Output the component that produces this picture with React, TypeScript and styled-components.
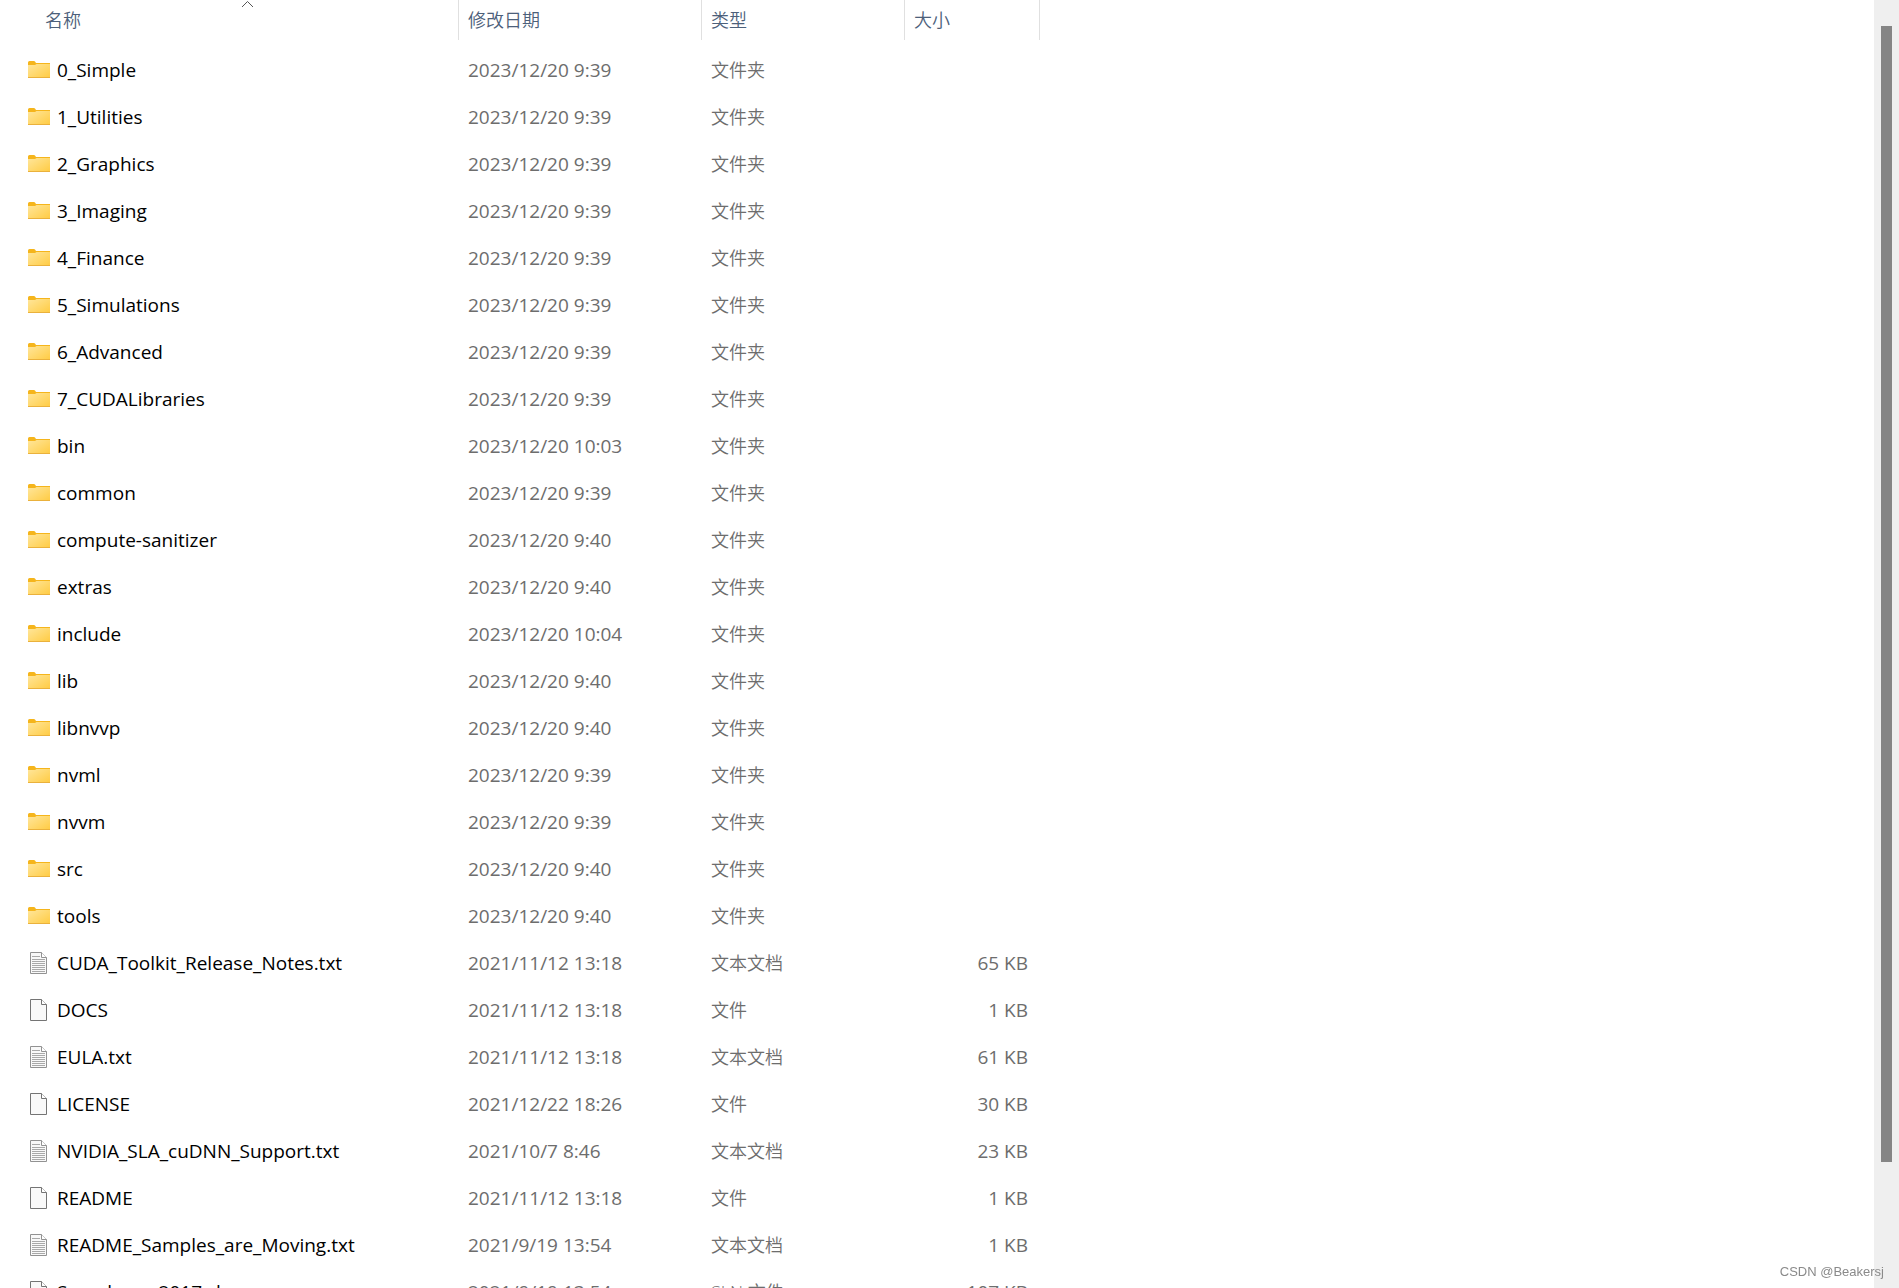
import React from "react";
import styled, { createGlobalStyle } from "styled-components";

const GlobalStyle = createGlobalStyle`
  * { box-sizing: border-box; }
  body {
    margin: 0;
    background: #fff;
    font-family: "Open Sans", "Noto Sans CJK SC", sans-serif;
    color: #000;
  }
`;

const Window = styled.main`
  display: flex;
  height: 100vh;
  overflow: hidden;
`;

const Content = styled.div`
  flex: 1;
  min-width: 0;
  overflow: hidden;
`;

const FileTable = styled.table`
  width: 100%;
  border-collapse: separate;
  border-spacing: 0;
  table-layout: fixed;
`;

const Column = styled.col<{ $width?: number }>`
  width: ${(p) => (p.$width ? `${p.$width}px` : "auto")};
`;

const HeaderCell = styled.th<{ $divider?: boolean }>`
  position: relative;
  height: 40px;
  padding: 0;
  border-right: ${(p) => (p.$divider ? "1px solid #e0e0e0" : "none")};
`;

const SortButton = styled.button<{ $indent?: boolean }>`
  display: block;
  width: 100%;
  height: 40px;
  padding: 0 0 2px ${(p) => (p.$indent ? 45 : 9)}px;
  border: 0;
  background: none;
  color: #4c607a;
  font: 18px/38px "Noto Sans CJK SC", sans-serif;
  font-weight: 350;
  text-align: left;
`;

const SortArrow = styled.svg`
  position: absolute;
  top: 0;
  left: 241px;
  width: 13px;
  height: 8px;
`;

const Spacer = styled.tr`
  height: 6px;
`;

const Cell = styled.td<{ $align?: "right" }>`
  height: 47px;
  padding: 0 12px 0 9px;
  color: #6d6d6d;
  font-size: 19px;
  line-height: 24px;
  text-align: ${(p) => p.$align ?? "left"};
  white-space: nowrap;
`;

const TypeCell = styled(Cell)`
  font-size: 18px;
  font-weight: 350;
`;

const NameCell = styled(Cell)`
  padding: 0 0 0 28px;
  color: #000;
`;

const NameGroup = styled.div`
  display: flex;
  align-items: center;
  gap: 6px;
`;

const Icon = styled.svg`
  display: block;
  flex: none;
  width: 23px;
  height: 24px;
`;

const ScrollTrack = styled.div`
  flex: none;
  width: 25px;
  padding: 26px 7px 0;
  background: #efefef;
`;

const ScrollThumb = styled.div`
  height: 90%;
  background: #858585;
`;

const Watermark = styled.div`
  position: fixed;
  right: 15px;
  bottom: 8px;
  color: #8a8a8a;
  font: 13px/16px "Liberation Sans", Arial, sans-serif;
`;

function FolderIcon() {
  return (
    <Icon viewBox="0 0 23 24" aria-hidden="true">
      <defs>
        <linearGradient id="folder" x1="0" y1="0" x2="1" y2="1">
          <stop offset="0" stopColor="#ffe69b" />
          <stop offset="1" stopColor="#ffcb42" />
        </linearGradient>
      </defs>
      <path d="M0 4.5Q0 3 1.5 3H6Q7 3 8 5H22V12H0Z" fill="#f5b51c" />
      <path d="M0 7H7L8.500 6H22V20H0Z" fill="url(#folder)" />
      <path d="M0 19H22V20H0Z" fill="#eab13c" />
    </Icon>
  );
}

function PageIcon({ lined }: { lined?: boolean }) {
  const ink = lined ? "#929292" : "#747474";
  return (
    <Icon viewBox="0 0 23 24" aria-hidden="true">
      <path d="M2.500 1.500H13.500L18.500 6.500V22.500H2.500Z" fill="#f9f9f9" stroke={ink} />
      <path d="M13.500 1.500V6.500H18.500" fill="#fff" stroke={ink} />
      {lined && (
        <path
          d="M4 5.500H12M4 8.500H17M4 10.500H17M4 12.500H17M4 14.500H17M4 16.500H17M4 18.500H17M4 20.500H17"
          stroke="#a9a9a9"
        />
      )}
    </Icon>
  );
}

type Entry = [name: string, date: string, type: string, size?: string];

const folder = (name: string, time = "9:39"): Entry => [name, `2023/12/20 ${time}`, "文件夹"];

const entries: Entry[] = [
  folder("0_Simple"),
  folder("1_Utilities"),
  folder("2_Graphics"),
  folder("3_Imaging"),
  folder("4_Finance"),
  folder("5_Simulations"),
  folder("6_Advanced"),
  folder("7_CUDALibraries"),
  folder("bin", "10:03"),
  folder("common"),
  folder("compute-sanitizer", "9:40"),
  folder("extras", "9:40"),
  folder("include", "10:04"),
  folder("lib", "9:40"),
  folder("libnvvp", "9:40"),
  folder("nvml"),
  folder("nvvm"),
  folder("src", "9:40"),
  folder("tools", "9:40"),
  ["CUDA_Toolkit_Release_Notes.txt", "2021/11/12 13:18", "文本文档", "65 KB"],
  ["DOCS", "2021/11/12 13:18", "文件", "1 KB"],
  ["EULA.txt", "2021/11/12 13:18", "文本文档", "61 KB"],
  ["LICENSE", "2021/12/22 18:26", "文件", "30 KB"],
  ["NVIDIA_SLA_cuDNN_Support.txt", "2021/10/7 8:46", "文本文档", "23 KB"],
  ["README", "2021/11/12 13:18", "文件", "1 KB"],
  ["README_Samples_are_Moving.txt", "2021/9/19 13:54", "文本文档", "1 KB"],
  ["Samples_vs2017.sln", "2021/9/19 13:54", "SLN 文件", "107 KB"],
];

export default function App() {
  return (
    <Window>
      <GlobalStyle />
      <Content>
        <FileTable>
          <colgroup>
            <Column $width={459} />
            <Column $width={243} />
            <Column $width={203} />
            <Column $width={135} />
            <Column />
          </colgroup>
          <thead>
            <tr>
              <HeaderCell $divider scope="col" aria-sort="ascending">
                <SortArrow viewBox="0 0 13 8" aria-hidden="true">
                  <path d="M1 7L6.500 1.500L12 7" fill="none" stroke="#555" />
                </SortArrow>
                <SortButton $indent>名称</SortButton>
              </HeaderCell>
              <HeaderCell $divider scope="col"><SortButton>修改日期</SortButton></HeaderCell>
              <HeaderCell $divider scope="col"><SortButton>类型</SortButton></HeaderCell>
              <HeaderCell $divider scope="col"><SortButton>大小</SortButton></HeaderCell>
              <HeaderCell as="td" />
            </tr>
          </thead>
          <tbody>
            <Spacer aria-hidden="true" />
            {entries.map(([name, date, type, size]) => (
              <tr key={name}>
                <NameCell>
                  <NameGroup>
                    {type === "文件夹" ? <FolderIcon /> : <PageIcon lined={type === "文本文档"} />}
                    <span>{name}</span>
                  </NameGroup>
                </NameCell>
                <Cell>{date}</Cell>
                <TypeCell>{type}</TypeCell>
                <Cell $align="right">{size}</Cell>
              </tr>
            ))}
          </tbody>
        </FileTable>
      </Content>
      <ScrollTrack>
        <ScrollThumb />
      </ScrollTrack>
      <Watermark>CSDN @Beakersj</Watermark>
    </Window>
  );
}
